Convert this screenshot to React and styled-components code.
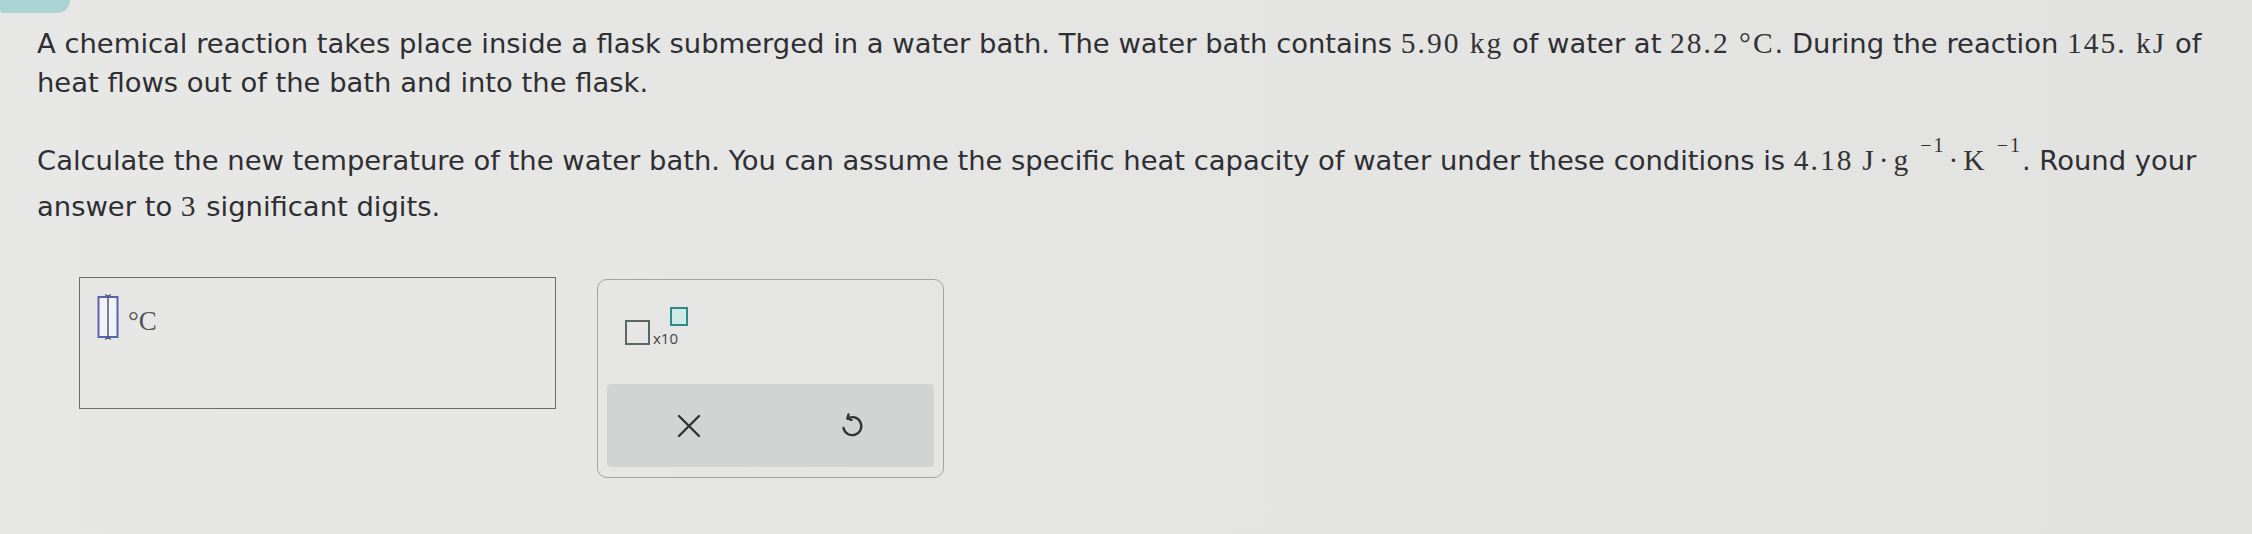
import React from "react";
import styled, { createGlobalStyle } from "styled-components";

const GlobalStyle = createGlobalStyle`
  html, body {
    margin: 0;
    padding: 0;
  }
  body {
    width: 2252px;
    height: 534px;
    overflow: hidden;
    background: linear-gradient(to right, #e7e7e5, #e4e4e2 60%, #e2e2e0);
    font-family: "DejaVu Sans", Verdana, sans-serif;
    color: #2e2e33;
  }
`;

export default function App() {
  return (
    <Page>
      <GlobalStyle />
      <TopTab />
      <Content>
        <Question>
          <Line>
            A chemical reaction takes place inside a flask submerged in a water bath. The water bath contains{" "}
            <Math>5.90&nbsp;kg</Math> of water at <Math>28.2&nbsp;°C</Math>. During the reaction{" "}
            <Math>145.&nbsp;kJ</Math> of
          </Line>
          <Line>heat flows out of the bath and into the flask.</Line>
        </Question>
        <Question>
          <Line $extra={7}>
            Calculate the new temperature of the water bath. You can assume the specific heat capacity of water
            under these conditions is <Math>4.18</Math>&nbsp;
            <Math>
              J<Dot>·</Dot>g<Sup>−1</Sup>
              <Dot>·</Dot>K<Sup>−1</Sup>
            </Math>
            . Round your
          </Line>
          <Line>
            answer to <Math>3</Math> significant digits.
          </Line>
        </Question>

        <AnswerRow>
          <AnswerBox>
            <Slot>
              <CursorIcon />
              <Unit>°C</Unit>
            </Slot>
          </AnswerBox>

          <Palette>
            <Tools>
              <Exponent>
                <Square />
                <Times>x10</Times>
                <Square $small />
              </Exponent>
            </Tools>
            <ActionBar>
              <IconButton aria-label="clear">
                <svg width="24" height="24" viewBox="0 0 24 24" fill="none" stroke="#333" strokeWidth="2.4" strokeLinecap="round">
                  <path d="M2 2 L22 22 M22 2 L2 22" />
                </svg>
              </IconButton>
              <IconButton aria-label="undo">
                <svg width="26" height="26" viewBox="0 0 26 26" fill="none" stroke="#333" strokeWidth="2.4" strokeLinecap="round" strokeLinejoin="round">
                  <path d="M8.5 5.5 A9 9 0 1 1 4.5 15" />
                  <path d="M9.5 1.5 L8.5 5.5 L12.5 7" />
                </svg>
              </IconButton>
            </ActionBar>
          </Palette>
        </AnswerRow>
      </Content>
    </Page>
  );
}

function CursorIcon() {
  return (
    <svg width="24" height="48" viewBox="0 0 24 48" fill="none">
      <rect x="2.5" y="4" width="19" height="40" fill="#f2f3f6" stroke="#5a63b3" strokeWidth="2" />
      <path d="M12 2 V46" stroke="#55586e" strokeWidth="1.5" />
      <path d="M9 1.5 L12 3.5 L15 1.5 M9 46.5 L12 44.5 L15 46.5" stroke="#55586e" strokeWidth="1.3" />
    </svg>
  );
}

const Page = styled.div`
  display: flex;
  flex-direction: column;
  min-height: 534px;
`;

const TopTab = styled.div`
  width: 70px;
  height: 13px;
  background: #a9d3d4;
  border-radius: 0 0 22px 6px;
`;

const Content = styled.div`
  padding: 11px 0 0 37px;
  display: flex;
  flex-direction: column;
`;

const Question = styled.p`
  margin: 0 0 39px;
  font-size: 27.4px;
  line-height: 39px;
  white-space: nowrap;
  &:last-of-type {
    margin-bottom: 51px;
  }
`;

const Line = styled.span`
  display: block;
  padding-bottom: ${(p) => p.$extra || 0}px;
`;

const Math = styled.span`
  font-family: "Liberation Serif", "Times New Roman", serif;
  font-size: 29.5px;
  line-height: 1;
  letter-spacing: 2px;
  color: #333;
`;

const Dot = styled.span`
  margin: 0 3px;
`;

const Sup = styled.sup`
  font-size: 20px;
  line-height: 0;
  vertical-align: 18px;
  letter-spacing: 2px;
  margin: 0 0 0 10px;
`;

const AnswerRow = styled.div`
  display: flex;
  align-items: flex-start;
  gap: 41px;
  margin-left: 42px;
`;

const AnswerBox = styled.div`
  width: 477px;
  height: 132px;
  box-sizing: border-box;
  border: 1.5px solid #6b6b6b;
  padding: 15px 16px;
`;

const Slot = styled.div`
  display: flex;
  align-items: center;
  gap: 8px;
`;

const Unit = styled.span`
  font-family: "Liberation Serif", "Times New Roman", serif;
  font-size: 27px;
  color: #555;
  margin-top: 8px;
`;

const Palette = styled.div`
  width: 347px;
  height: 199px;
  box-sizing: border-box;
  margin-top: 2px;
  border: 1.5px solid #a3a3a3;
  border-radius: 10px;
  padding: 0 9px 10px;
  display: flex;
  flex-direction: column;
`;

const Tools = styled.div`
  flex: 1;
  padding: 27px 0 0 18px;
`;

const Exponent = styled.div`
  display: flex;
  align-items: flex-end;
  height: 38px;
`;

const Square = styled.span`
  display: block;
  box-sizing: border-box;
  width: ${(p) => (p.$small ? "18px" : "25px")};
  height: ${(p) => (p.$small ? "19px" : "25px")};
  border: ${(p) => (p.$small ? "2.5px solid #2d8a8b" : "2px solid #5d6666")};
  background: ${(p) => (p.$small ? "#cfe8e8" : "transparent")};
  align-self: ${(p) => (p.$small ? "flex-start" : "flex-end")};
  margin-left: ${(p) => (p.$small ? "-8px" : "0")};
`;

const Times = styled.span`
  font-family: "Open Sans", "Liberation Sans", sans-serif;
  font-size: 15px;
  line-height: 1;
  color: #444;
  margin: 0 0 -1px 3px;
`;

const ActionBar = styled.div`
  height: 83px;
  background: #d2d4d4;
  border-radius: 4px;
  display: grid;
  grid-template-columns: 1fr 1fr;
  align-items: center;
  justify-items: center;
`;

const IconButton = styled.button`
  border: none;
  background: none;
  padding: 0;
  display: flex;
  align-items: center;
  justify-content: center;
  cursor: pointer;
`;
